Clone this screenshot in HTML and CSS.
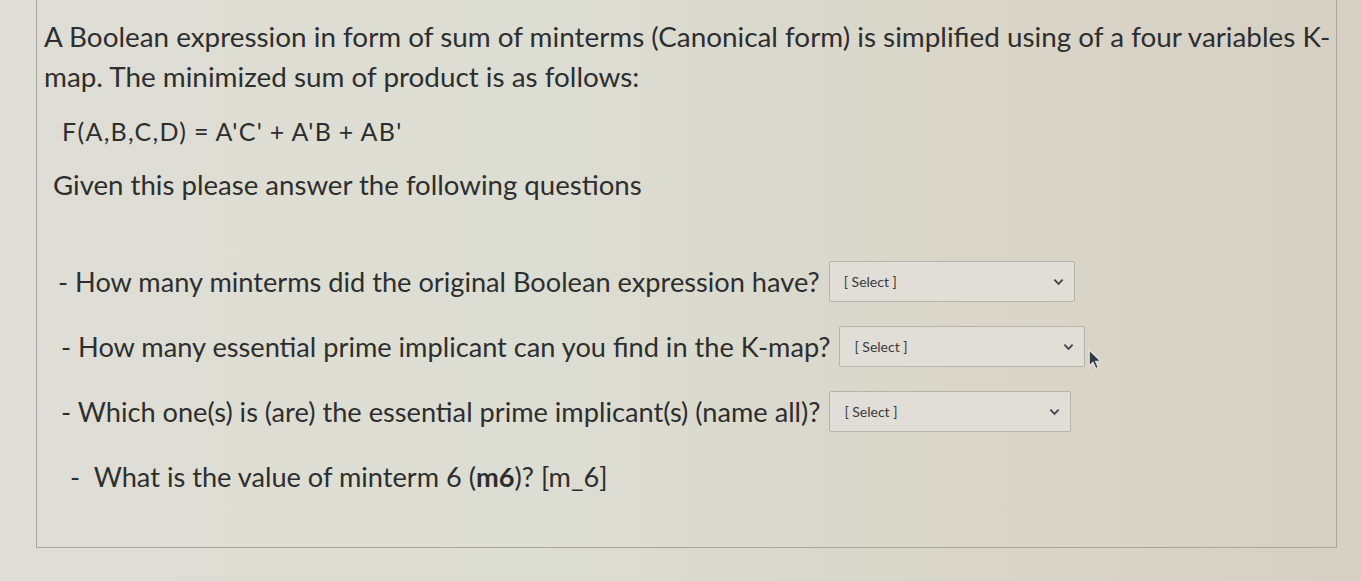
FILE: index.html
```html
<!DOCTYPE html>
<html>
<head>
<meta charset="utf-8">
<link rel="stylesheet" href="styles.css">
</head>
<body>
<div class="page">
  <div class="card">
    <p class="intro">A Boolean expression in form of sum of minterms (Canonical form) is simplified using of a four variables K-map. The minimized sum of product is as follows:</p>
    <p class="formula">F(A,B,C,D) = A'C' + A'B + AB'</p>
    <p class="given">Given this please answer the following questions</p>
    <div class="questions">
      <div class="q q1">- How many minterms did the original Boolean expression have? <span class="select"><span class="sel-text">[ Select ]</span><svg class="chev" viewBox="0 0 12 8" width="11" height="8"><path d="M1.5 1.5 L6 6 L10.5 1.5" fill="none" stroke="#444" stroke-width="2"/></svg></span></div>
      <div class="q q2">- How many essential prime implicant can you find in the K-map? <span class="select"><span class="sel-text">[ Select ]</span><svg class="chev" viewBox="0 0 12 8" width="11" height="8"><path d="M1.5 1.5 L6 6 L10.5 1.5" fill="none" stroke="#444" stroke-width="2"/></svg></span><svg class="cursor" viewBox="0 0 12 20" width="13" height="21"><path d="M1 1 L1 16 L4.6 12.6 L7.2 18.6 L9.6 17.6 L7 11.6 L11.8 11.6 Z" fill="#2f3a40" stroke="#e8e8e8" stroke-width="1"/></svg></div>
      <div class="q q3">- Which one(s) is (are) the essential prime implicant(s) (name all)? <span class="select"><span class="sel-text">[ Select ]</span><svg class="chev" viewBox="0 0 12 8" width="11" height="8"><path d="M1.5 1.5 L6 6 L10.5 1.5" fill="none" stroke="#444" stroke-width="2"/></svg></span></div>
      <div class="q q4">-  What is the value of minterm 6 (<b>m6</b>)? [m_6]</div>
    </div>
  </div>
</div>
</body>
</html>
```

FILE: styles.css
```css
html, body {
  margin: 0;
  padding: 0;
}
body {
  width: 1361px;
  height: 581px;
  overflow: hidden;
  background: linear-gradient(90deg, #dfded6 0%, #dcddd3 40%, #d9d5c8 75%, #d6d0c3 100%);
  font-family: Lato, "Open Sans", sans-serif;
  color: #2e2e2e;
}
.page {
  padding: 0 24px 0 36px;
}
.card {
  margin-top: -2px;
  height: 550px;
  box-sizing: border-box;
  border: 1px solid #a9a69d;
  border-top: none;
  padding: 19px 0 0 7px;
}
.intro {
  margin: 0;
  font-size: 27.85px;
  line-height: 40px;
  padding-right: 0;
}
.formula {
  margin: 19px 0 0 18px;
  font-size: 25px;
  letter-spacing: 1.3px;
  word-spacing: -1px;
  line-height: 30px;
}
.given {
  margin: 22px 0 0 9px;
  font-size: 27.6px;
  line-height: 34px;
}
.questions {
  margin-top: 59px;
  display: flex;
  flex-direction: column;
  gap: 24px;
}
.q {
  display: flex;
  align-items: center;
  height: 41px;
  font-size: 27.2px;
  white-space: pre;
}
.q1 { padding-left: 14px; }
.q2 { padding-left: 17px; }
.q3 { padding-left: 17px; }
.q4 { padding-left: 26px; }
.q b { font-weight: 700; }
.select {
  display: inline-flex;
  align-items: center;
  justify-content: space-between;
  width: 246px;
  height: 41px;
  box-sizing: border-box;
  margin-left: 2px;
  padding: 0 10px 0 14px;
  border: 1px solid #b6b3aa;
  border-radius: 2px;
  background: #e0ded6;
}
.q3 .select { width: 242px; }
.sel-text {
  font-size: 14px;
  color: #3a3a3a;
  white-space: pre;
}
.chev {
  display: block;
}
.cursor {
  margin-left: 3px;
  margin-top: 26px;
}
```
